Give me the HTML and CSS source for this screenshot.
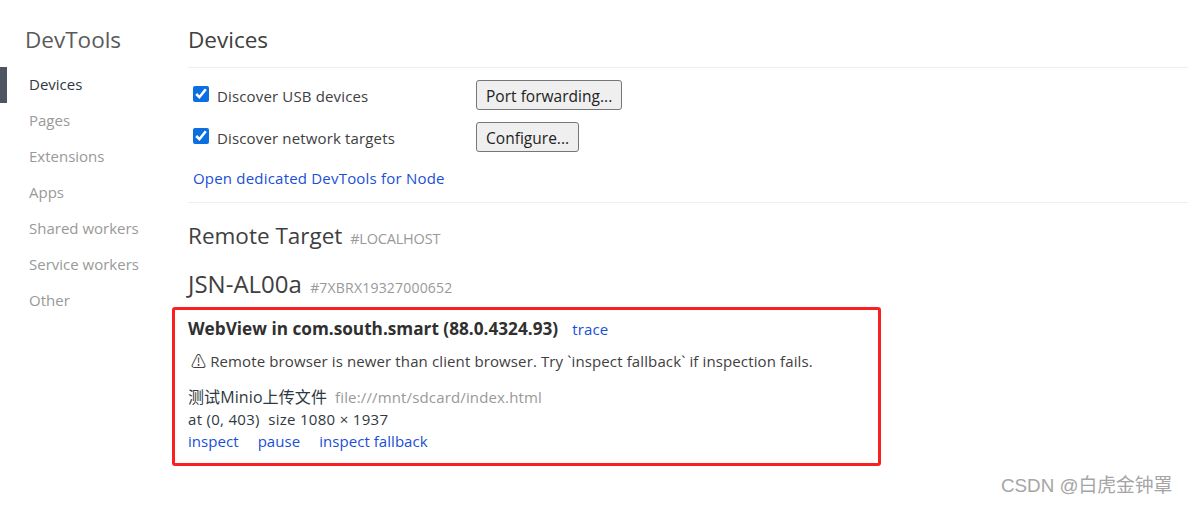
FILE: index.html
```html
<!DOCTYPE html>
<html lang="en">
<head>
<meta charset="utf-8">
<title>DevTools</title>
<link rel="stylesheet" href="styles.css">
</head>
<body>
<div class="page">
  <nav class="sidebar">
    <h1 class="brand">DevTools</h1>
    <ul class="nav">
      <li class="nav-item active">Devices</li>
      <li class="nav-item">Pages</li>
      <li class="nav-item">Extensions</li>
      <li class="nav-item">Apps</li>
      <li class="nav-item">Shared workers</li>
      <li class="nav-item">Service workers</li>
      <li class="nav-item">Other</li>
    </ul>
  </nav>
  <main class="content">
    <h2 class="page-title">Devices</h2>
    <section class="settings">
      <div class="setting-row">
        <label class="check"><input type="checkbox" checked>Discover USB devices</label>
        <button class="btn" type="button">Port forwarding...</button>
      </div>
      <div class="setting-row second">
        <label class="check"><input type="checkbox" checked>Discover network targets</label>
        <button class="btn" type="button">Configure...</button>
      </div>
      <a class="link node-link" href="#">Open dedicated DevTools for Node</a>
    </section>
    <h3 class="remote-title">Remote Target <small class="remote-sub">#LOCALHOST</small></h3>
    <h3 class="device-title">JSN-AL00a <small class="device-sub">#7XBRX19327000652</small></h3>
    <section class="target">
      <div class="target-head"><strong>WebView in com.south.smart (88.0.4324.93)</strong><a class="link trace" href="#">trace</a></div>
      <p class="warning">⚠ Remote browser is newer than client browser. Try `inspect fallback` if inspection fails.</p>
      <div class="page-name"><span class="name">测试Minio上传文件</span><span class="url">file:///mnt/sdcard/index.html</span></div>
      <div class="geometry">at (0, 403)&nbsp; size 1080 × 1937</div>
      <div class="actions"><a class="link" href="#">inspect</a><a class="link" href="#">pause</a><a class="link" href="#">inspect fallback</a></div>
    </section>
  </main>
</div>
<div class="watermark">CSDN @白虎金钟罩</div>
</body>
</html>
```

FILE: styles.css
```css
* { box-sizing: border-box; }
html, body { margin: 0; padding: 0; background: #fff; }
body {
  width: 1188px;
  height: 505px;
  overflow: hidden;
  position: relative;
  font-family: "Open Sans", "Noto Sans", "Noto Sans CJK SC", sans-serif;
  font-size: 15px;
  letter-spacing: 0.15px;
  color: #303942;
}
.page { display: flex; align-items: flex-start; }
.sidebar { width: 188px; flex: none; padding-top: 24px; }
.brand {
  margin: 0 0 0 25px;
  font-size: 22.5px;
  line-height: 31px;
  font-weight: 400;
  color: #5a5a5a;
  letter-spacing: 0;
}
.nav { list-style: none; margin: 12px 0 0; padding: 0; }
.nav-item {
  height: 36px;
  line-height: 34px;
  padding-left: 29px;
  color: #999;
  letter-spacing: 0;
}
.nav-item.active {
  color: #303942;
  border-left: 7px solid #4d5560;
  padding-left: 22px;
}
.content { flex: 1; min-width: 0; padding-top: 24px; }
.page-title {
  margin: 0;
  height: 44px;
  font-size: 22.5px;
  line-height: 31px;
  font-weight: 400;
  color: #404040;
  letter-spacing: 0;
  border-bottom: 1px solid #eee;
}
.settings { border-bottom: 1px solid #eee; height: 135px; padding: 12px 0 0 5px; }
.setting-row { display: flex; align-items: center; height: 30px; }
.setting-row.second { margin-top: 12px; }
.check { width: 283px; display: flex; align-items: center; padding-top: 2px; color: #404040; }
.check input {
  width: 16px;
  height: 16px;
  margin: 0 8px 5px 0;
  accent-color: #0b6fe0;
}
.btn {
  height: 30px;
  padding: 1px 9px 0;
  font: inherit;
  font-size: 15.5px;
  letter-spacing: 0.02px;
  color: #222;
  background: #efefef;
  border: 1px solid #767676;
  border-radius: 3px;
}
.link { color: #1a4fd6; text-decoration: none; }
.node-link { display: block; margin-top: 15px; line-height: 22px; letter-spacing: 0.2px; }
.remote-title {
  margin: 17px 0 0;
  font-size: 22.5px;
  line-height: 31px;
  font-weight: 400;
  color: #404040;
  letter-spacing: 0;
}
.remote-sub { margin-left: 2px; font-size: 14.5px; color: #999; letter-spacing: -0.2px; }
.device-title {
  margin: 14px 0 0;
  font-size: 24px;
  line-height: 31px;
  font-weight: 400;
  color: #404040;
  letter-spacing: 0;
}
.device-sub { margin-left: 2px; font-size: 14px; color: #999; letter-spacing: 0.2px; }
.target {
  width: 709px;
  height: 159px;
  margin: 4px 0 0 -16px;
  padding: 7px 0 0 13px;
  border: 3px solid #fb2020;
  border-radius: 3px;
}
.target-head { line-height: 24px; font-size: 15px; color: #303030; }
.target-head strong { font-size: 17.2px; font-weight: 700; letter-spacing: 0; }
.trace { margin-left: 14px; }
.warning { margin: 9px 0 0 3px; line-height: 22px; color: #404040; letter-spacing: 0.12px; }
.page-name { margin-top: 14px; line-height: 22px; color: #303942; }
.name { font-size: 16px; letter-spacing: 0.1px; }
.url { margin-left: 8px; color: #999; }
.geometry { line-height: 22px; color: #303942; letter-spacing: 0.3px; }
.actions { display: flex; gap: 19px; line-height: 22px; letter-spacing: 0.05px; }
.watermark {
  position: absolute;
  left: 1001px;
  top: 474px;
  font-size: 18.8px;
  line-height: 24px;
  letter-spacing: 0;
  color: #a5a5a5;
  font-family: "Liberation Sans", "Noto Sans CJK SC", sans-serif;
}
```
